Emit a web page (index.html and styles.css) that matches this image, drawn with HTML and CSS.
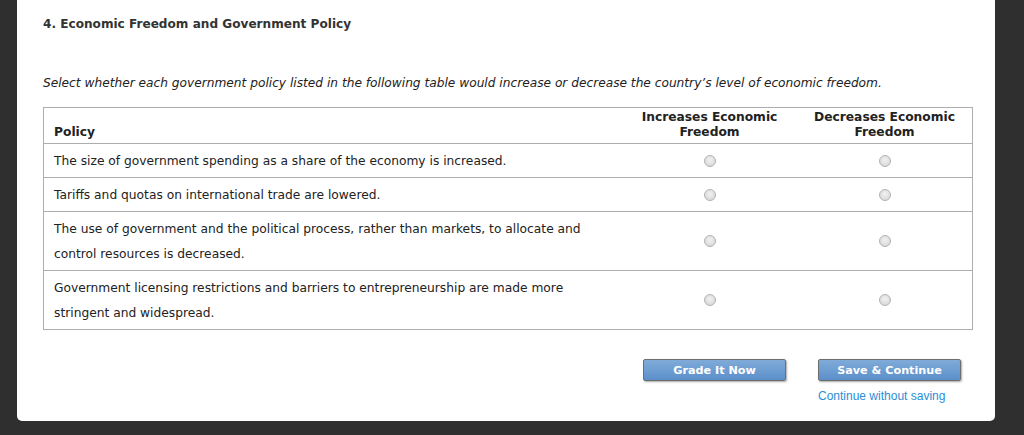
FILE: index.html
```html
<!DOCTYPE html>
<html>
<head>
<meta charset="utf-8">
<link rel="stylesheet" href="styles.css">
</head>
<body>
<div class="panel">
  <h2 class="title">4. Economic Freedom and Government Policy</h2>
  <p class="instr">Select whether each government policy listed in the following table would increase or decrease the country’s level of economic freedom.</p>
  <table class="grid">
    <thead>
      <tr>
        <th class="pol">Policy</th>
        <th class="opt">Increases Economic<br>Freedom</th>
        <th class="opt">Decreases Economic<br>Freedom</th>
      </tr>
    </thead>
    <tbody>
      <tr>
        <td class="pol">The size of government spending as a share of the economy is increased.</td>
        <td class="opt"><input type="radio" name="r1"></td>
        <td class="opt"><input type="radio" name="r1"></td>
      </tr>
      <tr>
        <td class="pol">Tariffs and quotas on international trade are lowered.</td>
        <td class="opt"><input type="radio" name="r2"></td>
        <td class="opt"><input type="radio" name="r2"></td>
      </tr>
      <tr>
        <td class="pol">The use of government and the political process, rather than markets, to allocate and<br>control resources is decreased.</td>
        <td class="opt"><input type="radio" name="r3"></td>
        <td class="opt"><input type="radio" name="r3"></td>
      </tr>
      <tr>
        <td class="pol">Government licensing restrictions and barriers to entrepreneurship are made more<br>stringent and widespread.</td>
        <td class="opt"><input type="radio" name="r4"></td>
        <td class="opt"><input type="radio" name="r4"></td>
      </tr>
    </tbody>
  </table>
  <div class="actions">
    <div class="act">
      <button class="btn">Grade It Now</button>
    </div>
    <div class="act">
      <button class="btn">Save &amp; Continue</button>
      <a class="link" href="#">Continue without saving</a>
    </div>
  </div>
</div>
</body>
</html>
```

FILE: styles.css
```css
html, body {
  margin: 0;
  padding: 0;
  background: #2f2f2f;
}
body {
  font-family: "DejaVu Sans", Verdana, sans-serif;
  color: #222;
}
.panel {
  margin-left: 17px;
  width: 978px;
  height: 421px;
  box-sizing: border-box;
  padding: 16px 22px 0 26px;
  background: #fff;
  border-radius: 0 0 5px 5px;
}
.title {
  margin: 0;
  font-size: 12.1px;
  line-height: 16px;
  font-weight: bold;
  color: #333;
}
.instr {
  margin: 43px 0 0;
  font-size: 12.2px;
  line-height: 16px;
  font-style: italic;
  color: #222;
}
.grid {
  margin-top: 16px;
  width: 930px;
  border-collapse: collapse;
  border: 1px solid #adadad;
  font-size: 12.25px;
}
.grid th {
  font-weight: bold;
  line-height: 15px;
  padding: 2px 10px 3px;
  vertical-align: bottom;
  border-bottom: 1px solid #adadad;
  color: #222;
}
.grid td {
  line-height: 25px;
  padding: 5px 10px 3px;
  border-bottom: 1px solid #adadad;
}
.grid .pol {
  text-align: left;
}
.grid .opt {
  width: 155px;
  text-align: center;
  vertical-align: middle;
}
.grid td.opt {
  padding: 4px 10px;
}
.grid th.opt {
  vertical-align: bottom;
}
input[type=radio] {
  appearance: none;
  -webkit-appearance: none;
  display: block;
  margin: 0 auto;
  width: 12px;
  height: 12px;
  border-radius: 50%;
  border: 1px solid #b4b4b4;
  background: radial-gradient(circle at 50% 40%, #f2f2f2 0%, #e0e0e0 55%, #d2d2d2 100%);
  box-sizing: border-box;
}
.actions {
  display: flex;
  justify-content: flex-end;
  gap: 32px;
  margin-top: 29px;
  padding-right: 12px;
}
.act {
  display: flex;
  flex-direction: column;
  align-items: flex-start;
}
.btn {
  width: 143px;
  height: 22px;
  padding: 0;
  border: 1px solid #6e6e6e;
  border-radius: 2px;
  background: linear-gradient(#80abd9, #5b8fca);
  box-shadow: 1px 1px 2px rgba(0,0,0,0.35);
  color: #fff;
  font-family: "DejaVu Sans", Verdana, sans-serif;
  font-weight: bold;
  font-size: 11.2px;
}
.link {
  margin-top: 8px;
  font-family: "Liberation Sans", Arial, sans-serif;
  font-size: 12px;
  line-height: 14px;
  color: #2a8fd6;
  text-decoration: none;
}
```
